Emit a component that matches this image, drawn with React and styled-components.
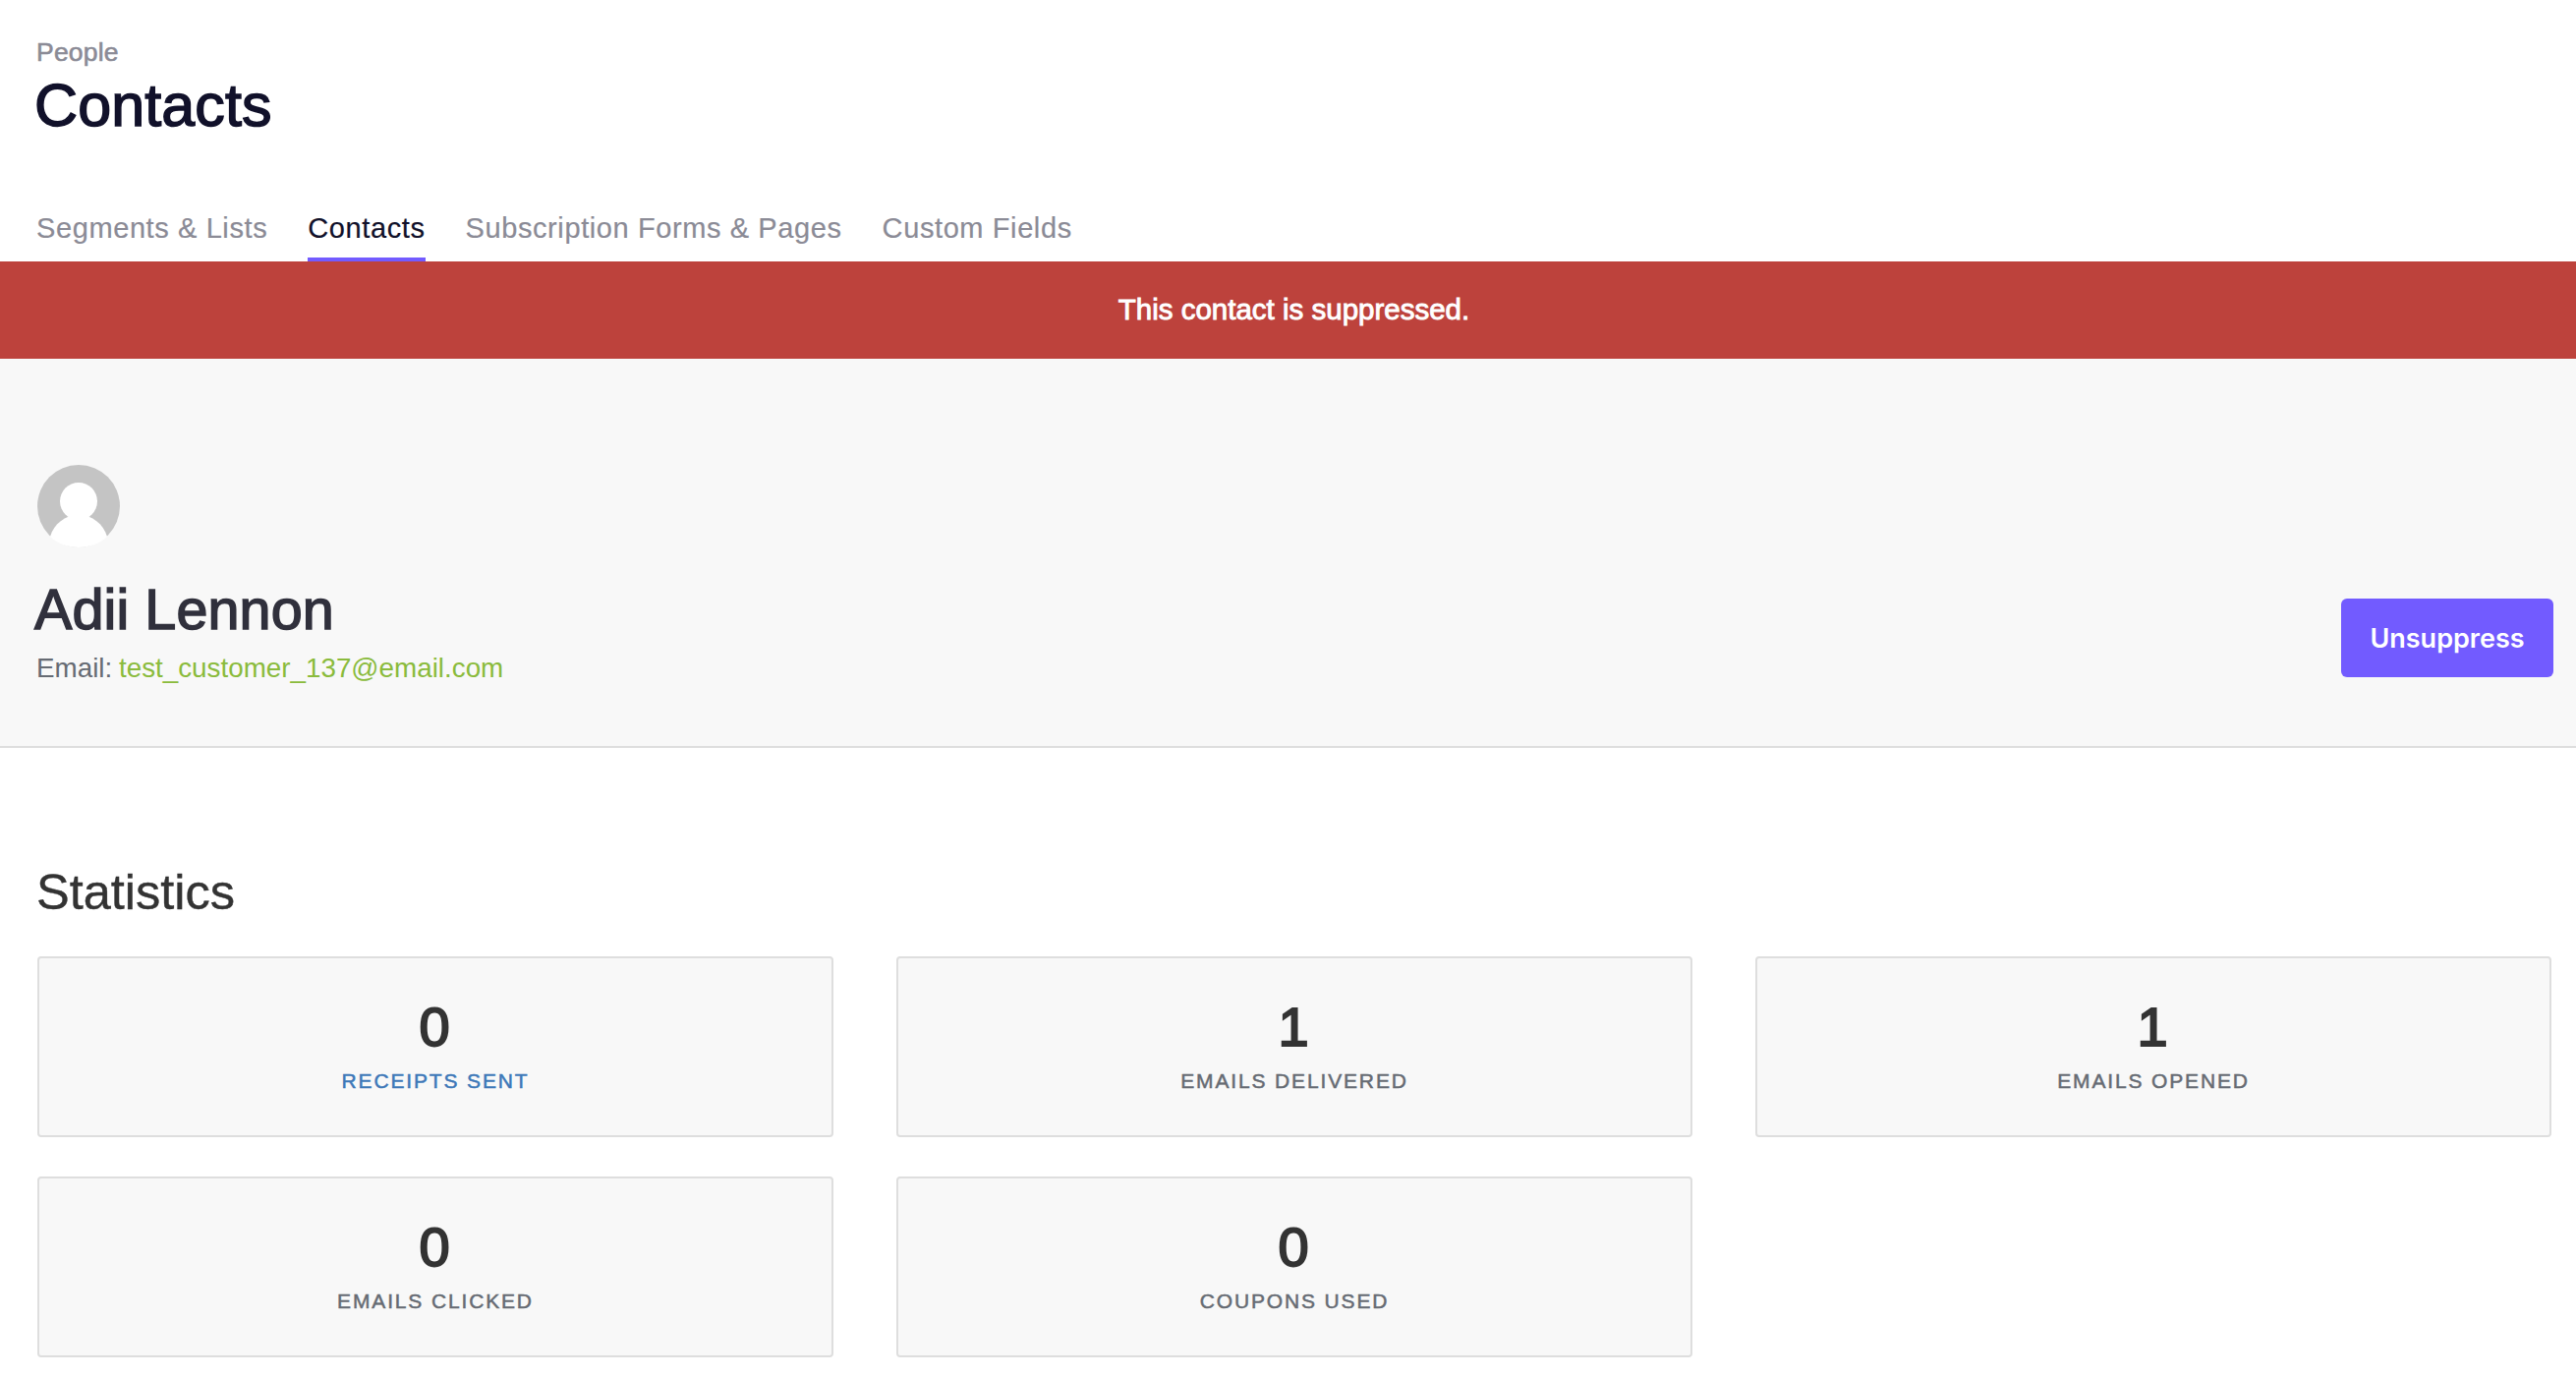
import React from "react"
import styled, { createGlobalStyle } from "styled-components"

const GlobalStyle = createGlobalStyle`
    html, body {
        margin: 0;
        padding: 0;
        background: #ffffff;
    }
    body {
        font-family: "Liberation Sans", Arial, sans-serif;
        overflow: hidden;
    }
`

const Page = styled.div`
    width: 2621px;
    height: 1400px;
    overflow: hidden;
`

const Header = styled.header`
    padding: 36px 36px 0;
    height: 266px;
    box-sizing: border-box;
    display: flex;
    flex-direction: column;
`

const Crumb = styled.div`
    font-size: 26.5px;
    line-height: 34px;
    letter-spacing: 0.2px;
    color: #8b8b96;
    padding-left: 1px;
    -webkit-text-stroke: 0.6px #8b8b96;
`

const Title = styled.h1`
    margin: 4px 0 0 -1px;
    font-size: 61px;
    line-height: 66px;
    letter-spacing: 0.1px;
    font-weight: 400;
    color: #11112a;
    -webkit-text-stroke: 1.5px #11112a;
`

const Tabs = styled.nav`
    margin-top: auto;
    display: flex;
    gap: 41px;
    padding-left: 1px;
`

const Tab = styled.a`
    display: block;
    height: 62px;
    box-sizing: border-box;
    padding-top: 12px;
    font-size: 29px;
    line-height: 32px;
    letter-spacing: 0.6px;
    color: ${p => (p.$active ? "#11112a" : "#8b8b96")};
    border-bottom: 4px solid ${p => (p.$active ? "#725bff" : "transparent")};
    -webkit-text-stroke: 0.2px ${p => (p.$active ? "#11112a" : "#8b8b96")};
`

const Banner = styled.div`
    height: 99px;
    box-sizing: border-box;
    padding: 0 0 2px 12px;
    background: #bd423c;
    color: #ffffff;
    display: flex;
    align-items: center;
    justify-content: center;
    font-size: 29.5px;
    font-weight: 400;
    -webkit-text-stroke: 0.9px #ffffff;
`

const Profile = styled.section`
    height: 396px;
    box-sizing: border-box;
    background: #f8f8f8;
    border-bottom: 2px solid #dedede;
    padding: 108px 23px 0 36px;
    display: flex;
    justify-content: space-between;
    align-items: flex-start;
`

const ProfileInfo = styled.div`
    display: flex;
    flex-direction: column;
`

const Avatar = styled.svg`
    display: block;
    width: 84px;
    height: 84px;
    margin-left: 2px;
`

const Name = styled.h2`
    margin: 30px 0 0 -1px;
    font-size: 57.5px;
    line-height: 66px;
    letter-spacing: 0.1px;
    font-weight: 400;
    color: #30303c;
    -webkit-text-stroke: 1.5px #30303c;
`

const EmailRow = styled.div`
    margin-top: 9px;
    margin-left: 1px;
    font-size: 27.8px;
    line-height: 36px;
    word-spacing: -1px;
    color: #666b73;
`

const EmailLink = styled.a`
    color: #8abb3c;
`

const Button = styled.button`
    margin-top: 136px;
    width: 216px;
    height: 80px;
    border: none;
    border-radius: 6px;
    background: #725bff;
    color: #ffffff;
    font-family: Inter, sans-serif;
    font-size: 27px;
    font-weight: 600;
`

const Stats = styled.section`
    padding: 118px 25px 0 38px;
`

const StatsTitle = styled.h3`
    margin: 0 0 36px -1px;
    font-size: 50.5px;
    line-height: 58px;
    font-weight: 400;
    color: #333333;
    -webkit-text-stroke: 0.4px #333333;
`

const StatsGrid = styled.div`
    display: grid;
    grid-template-columns: repeat(3, 1fr);
    column-gap: 64px;
    row-gap: 40px;
`

const StatCard = styled.div`
    height: 184px;
    box-sizing: border-box;
    background: #f8f8f8;
    border: 2px solid #dedede;
    border-radius: 4px;
    display: flex;
    flex-direction: column;
    align-items: center;
    padding-top: 38px;
`

const StatNumber = styled.div`
    font-size: 56px;
    line-height: 64px;
    margin-right: 2px;
    color: #333333;
    -webkit-text-stroke: 2px #333333;
`

const StatLabel = styled.div`
    margin-top: 10px;
    font-size: 21px;
    line-height: 26px;
    letter-spacing: 1.85px;
    color: ${p => (p.$highlight ? "#3d78b8" : "#666b73")};
    -webkit-text-stroke: 0.5px ${p => (p.$highlight ? "#3d78b8" : "#666b73")};
`

const stats = [
    { value: 0, label: "RECEIPTS SENT", highlight: true },
    { value: 1, label: "EMAILS DELIVERED" },
    { value: 1, label: "EMAILS OPENED" },
    { value: 0, label: "EMAILS CLICKED" },
    { value: 0, label: "COUPONS USED" },
]

const App = () => {
    return (
        <Page>
            <GlobalStyle />
            <Header>
                <Crumb>People</Crumb>
                <Title>Contacts</Title>
                <Tabs>
                    <Tab>Segments &amp; Lists</Tab>
                    <Tab $active>Contacts</Tab>
                    <Tab>Subscription Forms &amp; Pages</Tab>
                    <Tab>Custom Fields</Tab>
                </Tabs>
            </Header>
            <Banner>This contact is suppressed.</Banner>
            <Profile>
                <ProfileInfo>
                    <Avatar viewBox="0 0 84 84">
                        <circle cx="42" cy="42" r="42" fill="#c4c4c4" />
                        <circle cx="42" cy="37" r="19" fill="#ffffff" />
                        <path d="M13 73 C17 60 28 51 42 51 C56 51 67 60 71 73 C64 80 53 84 42 84 C31 84 20 80 13 73 Z" fill="#ffffff" />
                    </Avatar>
                    <Name>Adii Lennon</Name>
                    <EmailRow>
                        Email: <EmailLink>test_customer_137@email.com</EmailLink>
                    </EmailRow>
                </ProfileInfo>
                <Button>Unsuppress</Button>
            </Profile>
            <Stats>
                <StatsTitle>Statistics</StatsTitle>
                <StatsGrid>
                    {stats.map(s => (
                        <StatCard key={s.label}>
                            <StatNumber>{s.value}</StatNumber>
                            <StatLabel $highlight={s.highlight}>{s.label}</StatLabel>
                        </StatCard>
                    ))}
                </StatsGrid>
            </Stats>
        </Page>
    )
}

export default App
